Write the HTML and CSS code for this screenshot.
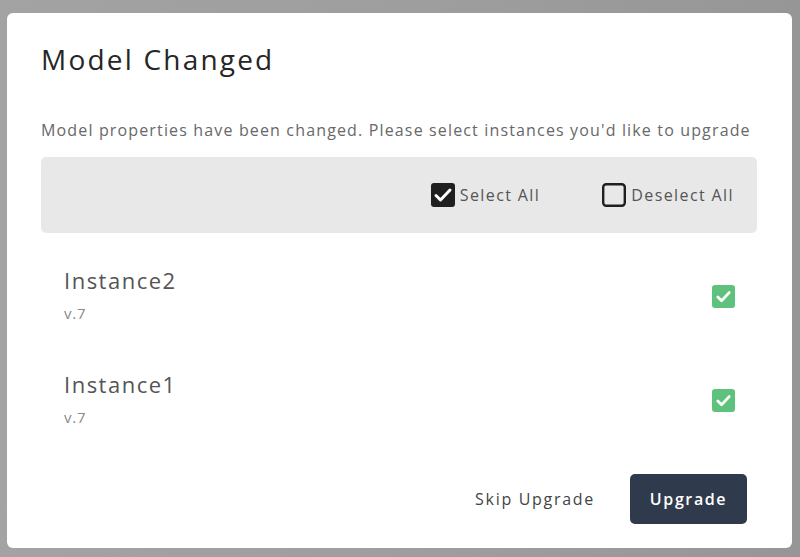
FILE: index.html
```html
<!DOCTYPE html>
<html lang="en">
<head>
<meta charset="utf-8">
<title>Model Changed</title>
<link rel="stylesheet" href="styles.css">
</head>
<body>
<div class="backdrop">
  <div class="modal">
    <h1 class="title">Model Changed</h1>
    <p class="subtitle">Model properties have been changed. Please select instances you'd like to upgrade</p>
    <div class="bulk-bar">
      <label class="bulk-option">
        <svg class="box" width="26" height="26" viewBox="0 0 26 26"><rect x="1" y="1" width="24" height="24" rx="3" fill="#1f1f1f"/><path d="M6 13.5l4.5 4.5 9.5-10" fill="none" stroke="#fff" stroke-width="3" stroke-linecap="round" stroke-linejoin="round"/></svg>
        <span>Select All</span>
      </label>
      <label class="bulk-option">
        <svg class="box" width="26" height="26" viewBox="0 0 26 26"><rect x="2.2" y="2.2" width="21.6" height="21.6" rx="3" fill="none" stroke="#1f1f1f" stroke-width="2.4"/></svg>
        <span>Deselect All</span>
      </label>
    </div>
    <ul class="instances">
      <li class="instance">
        <div class="info">
          <div class="name">Instance2</div>
          <div class="version">v.7</div>
        </div>
        <svg class="check" width="23" height="23" viewBox="0 0 23 23"><rect width="23" height="23" rx="3" fill="#5ec27c"/><path d="M5.8 12l3.8 3.8 7.6-8.2" fill="none" stroke="#fff" stroke-width="2.8" stroke-linecap="round" stroke-linejoin="round"/></svg>
      </li>
      <li class="instance">
        <div class="info">
          <div class="name">Instance1</div>
          <div class="version">v.7</div>
        </div>
        <svg class="check" width="23" height="23" viewBox="0 0 23 23"><rect width="23" height="23" rx="3" fill="#5ec27c"/><path d="M5.8 12l3.8 3.8 7.6-8.2" fill="none" stroke="#fff" stroke-width="2.8" stroke-linecap="round" stroke-linejoin="round"/></svg>
      </li>
    </ul>
    <div class="footer">
      <button class="btn-link">Skip Upgrade</button>
      <button class="btn-primary">Upgrade</button>
    </div>
  </div>
</div>
</body>
</html>
```

FILE: styles.css
```css
* { box-sizing: border-box; }

html, body {
  margin: 0;
  padding: 0;
  width: 800px;
  height: 557px;
  overflow: hidden;
}

body {
  font-family: "Open Sans", "Noto Sans", sans-serif;
  background: #9c9c9c;
}

.backdrop {
  height: 557px;
  padding: 13px 8px 0 7px;
  background: linear-gradient(to right, #a3a3a3 0%, #9d9d9d 60%, #969696 100%);
}

.modal {
  height: 535px;
  background: #ffffff;
  border-radius: 6px;
  padding: 29px 35px 0 34px;
  display: flex;
  flex-direction: column;
}

.title {
  margin: 0;
  font-size: 28px;
  line-height: 34px;
  font-weight: 400;
  color: #262626;
  letter-spacing: 2.2px;
}

.subtitle {
  margin: 44px 0 0;
  font-size: 16px;
  line-height: 20px;
  color: #686868;
  letter-spacing: 1.15px;
  white-space: nowrap;
}

.bulk-bar {
  margin-top: 17px;
  height: 76px;
  background: #e8e8e8;
  border-radius: 5px;
  display: flex;
  justify-content: flex-end;
  align-items: center;
  gap: 61px;
  padding: 0 23px 0 0;
}

.bulk-option {
  display: flex;
  align-items: center;
  gap: 4px;
  font-size: 16px;
  color: #555555;
  letter-spacing: 1.4px;
}

.box { display: block; }

.instances {
  list-style: none;
  margin: 33px 0 0;
  padding: 0;
}

.instance {
  height: 104px;
  display: flex;
  align-items: flex-start;
  justify-content: space-between;
  padding: 0 22px 0 23px;
}

.name {
  font-size: 22px;
  line-height: 28px;
  color: #555555;
  letter-spacing: 1.5px;
}

.version {
  margin-top: 9px;
  font-size: 15px;
  line-height: 20px;
  color: #8a8a8a;
  letter-spacing: 0.8px;
}

.check {
  display: block;
  margin-top: 19px;
}

.footer {
  display: flex;
  justify-content: flex-end;
  align-items: center;
  gap: 35px;
  padding-right: 10px;
}

.btn-link {
  border: 0;
  background: none;
  padding: 0;
  font-family: inherit;
  font-size: 16px;
  color: #444444;
  letter-spacing: 1.7px;
}

.btn-primary {
  width: 117px;
  height: 50px;
  border: 0;
  border-radius: 5px;
  background: #2f3b4c;
  color: #ffffff;
  font-family: inherit;
  font-size: 16px;
  font-weight: 600;
  letter-spacing: 1.6px;
}
```
